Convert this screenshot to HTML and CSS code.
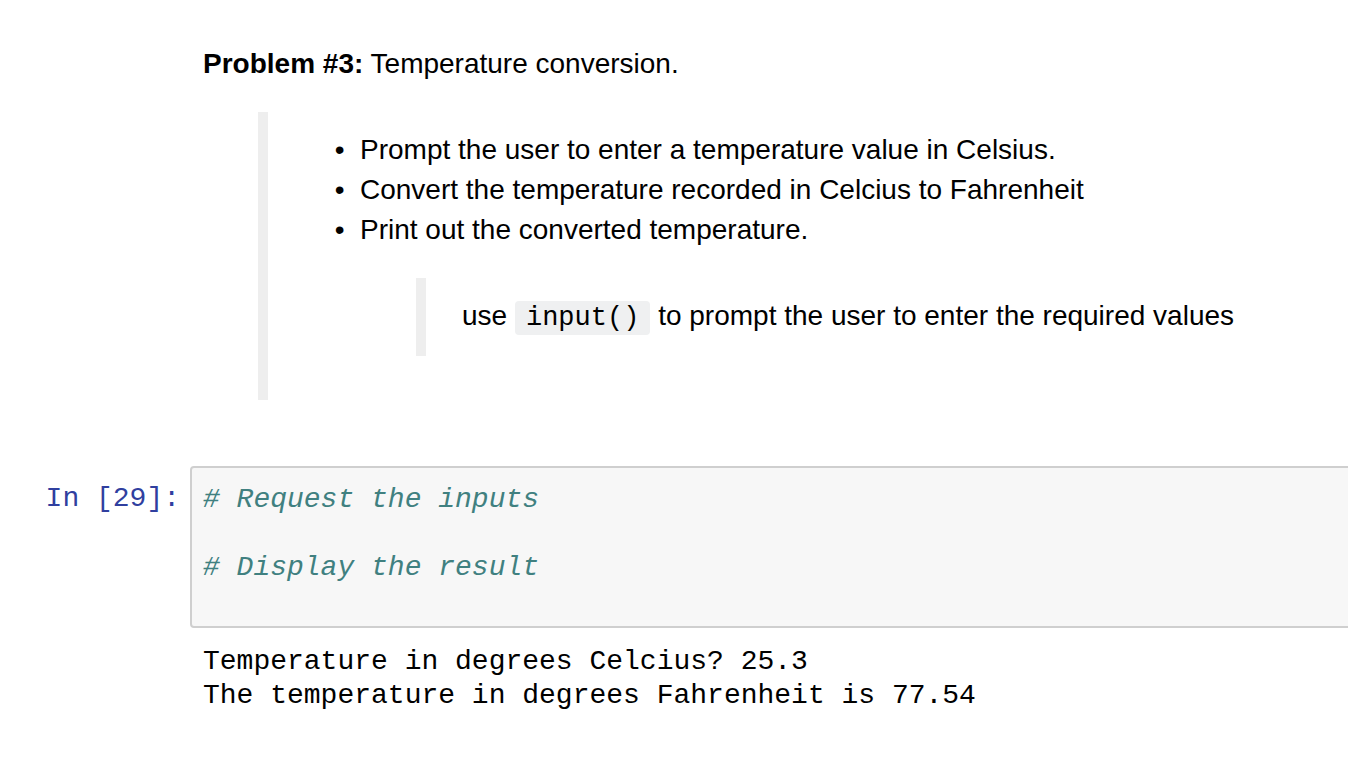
FILE: index.html
```html
<!DOCTYPE html>
<html>
<head>
<meta charset="utf-8">
<link rel="stylesheet" href="styles.css">
</head>
<body>
<div class="notebook">
  <div class="md-cell">
    <p class="title"><strong>Problem #3:</strong> Temperature conversion.</p>
    <blockquote class="quote">
      <ul class="list">
        <li>Prompt the user to enter a temperature value in Celsius.</li>
        <li>Convert the temperature recorded in Celcius to Fahrenheit</li>
        <li>Print out the converted temperature.</li>
      </ul>
      <blockquote class="quote inner">
        <p>use <code class="inline-code">input()</code> to prompt the user to enter the required values</p>
      </blockquote>
    </blockquote>
  </div>
  <div class="code-cell">
    <div class="input-row">
      <div class="prompt">In&nbsp;[29]:</div>
      <div class="input-area">
        <pre class="code"><span class="comment"># Request the inputs</span>

<span class="comment"># Display the result</span>
</pre>
      </div>
    </div>
    <div class="output-row">
      <div class="prompt"></div>
      <pre class="output">Temperature in degrees Celcius? 25.3
The temperature in degrees Fahrenheit is 77.54</pre>
    </div>
  </div>
</div>
</body>
</html>
```
FILE: styles.css
```css
html, body {
  margin: 0;
  padding: 0;
  background: #ffffff;
  overflow: hidden;
}
body {
  width: 1348px;
  height: 768px;
  font-family: "Liberation Sans", Arial, sans-serif;
  color: #000;
}
.notebook {
  padding-top: 44px;
}
.md-cell {
  margin-left: 203px;
  font-size: 28px;
  line-height: 40px;
}
.title {
  margin: 0 0 28px 0;
}
.quote {
  margin: 0 0 0 55px;
  border-left: 10px solid #eeeeee;
  padding: 18px 0 18px 36px;
}
.list {
  margin: 0;
  padding-left: 56px;
}
.list li::marker {
  content: "\2022\00a0\00a0";
}
.quote.inner {
  margin: 28px 0 26px 112px;
  padding: 18px 0 18px 36px;
}
.quote.inner p {
  margin: 0;
}
.inline-code {
  font-family: "Liberation Mono", "Courier New", monospace;
  font-size: 27px;
  background: #eff0f1;
  padding: 2px 11px;
  border-radius: 4px;
}
.code-cell {
  margin-top: 66px;
}
.input-row, .output-row {
  display: flex;
}
.prompt {
  width: 180px;
  flex: none;
  text-align: right;
  padding-right: 10px;
  font-family: "Liberation Mono", "Courier New", monospace;
  font-size: 28px;
  line-height: 34px;
  color: #303f9f;
  padding-top: 16px;
  box-sizing: content-box;
}
.input-area {
  width: 1300px;
  flex: none;
  border: 2px solid #cfcfcf;
  border-radius: 4px;
  background: #f7f7f7;
  box-sizing: border-box;
  height: 162px;
}
.code {
  margin: 0;
  padding: 15px 0 0 11px;
  font-family: "Liberation Mono", "Courier New", monospace;
  font-size: 28px;
  line-height: 34px;
}
.comment {
  color: #408080;
  font-style: italic;
}
.output-row .prompt {
  padding-top: 0;
}
.output {
  margin: 0;
  padding: 17px 0 0 13px;
  font-family: "Liberation Mono", "Courier New", monospace;
  font-size: 28px;
  line-height: 34px;
  color: #000;
}
```
